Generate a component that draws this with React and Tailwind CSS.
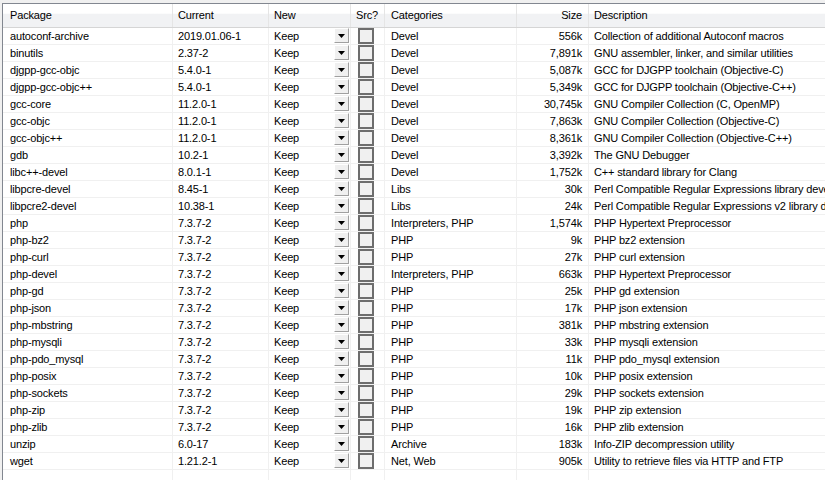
import React from 'react';

const packages = [
  ['autoconf-archive', '2019.01.06-1', 'Devel', '556k', 'Collection of additional Autoconf macros'],
  ['binutils', '2.37-2', 'Devel', '7,891k', 'GNU assembler, linker, and similar utilities'],
  ['djgpp-gcc-objc', '5.4.0-1', 'Devel', '5,087k', 'GCC for DJGPP toolchain (Objective-C)'],
  ['djgpp-gcc-objc++', '5.4.0-1', 'Devel', '5,349k', 'GCC for DJGPP toolchain (Objective-C++)'],
  ['gcc-core', '11.2.0-1', 'Devel', '30,745k', 'GNU Compiler Collection (C, OpenMP)'],
  ['gcc-objc', '11.2.0-1', 'Devel', '7,863k', 'GNU Compiler Collection (Objective-C)'],
  ['gcc-objc++', '11.2.0-1', 'Devel', '8,361k', 'GNU Compiler Collection (Objective-C++)'],
  ['gdb', '10.2-1', 'Devel', '3,392k', 'The GNU Debugger'],
  ['libc++-devel', '8.0.1-1', 'Devel', '1,752k', 'C++ standard library for Clang'],
  ['libpcre-devel', '8.45-1', 'Libs', '30k', 'Perl Compatible Regular Expressions library development'],
  ['libpcre2-devel', '10.38-1', 'Libs', '24k', 'Perl Compatible Regular Expressions v2 library development'],
  ['php', '7.3.7-2', 'Interpreters, PHP', '1,574k', 'PHP Hypertext Preprocessor'],
  ['php-bz2', '7.3.7-2', 'PHP', '9k', 'PHP bz2 extension'],
  ['php-curl', '7.3.7-2', 'PHP', '27k', 'PHP curl extension'],
  ['php-devel', '7.3.7-2', 'Interpreters, PHP', '663k', 'PHP Hypertext Preprocessor'],
  ['php-gd', '7.3.7-2', 'PHP', '25k', 'PHP gd extension'],
  ['php-json', '7.3.7-2', 'PHP', '17k', 'PHP json extension'],
  ['php-mbstring', '7.3.7-2', 'PHP', '381k', 'PHP mbstring extension'],
  ['php-mysqli', '7.3.7-2', 'PHP', '33k', 'PHP mysqli extension'],
  ['php-pdo_mysql', '7.3.7-2', 'PHP', '11k', 'PHP pdo_mysql extension'],
  ['php-posix', '7.3.7-2', 'PHP', '10k', 'PHP posix extension'],
  ['php-sockets', '7.3.7-2', 'PHP', '29k', 'PHP sockets extension'],
  ['php-zip', '7.3.7-2', 'PHP', '19k', 'PHP zip extension'],
  ['php-zlib', '7.3.7-2', 'PHP', '16k', 'PHP zlib extension'],
  ['unzip', '6.0-17', 'Archive', '183k', 'Info-ZIP decompression utility'],
  ['wget', '1.21.2-1', 'Net, Web', '905k', 'Utility to retrieve files via HTTP and FTP'],
];

const HeaderCell = ({ className, children }) => (
  <div className={`h-full flex items-center border-r border-[#e5e5e5] ${className}`}>{children}</div>
);

const DropButton = () => (
  <div className="w-[15px] h-[15px] bg-[#f0f0f0] border border-t-white border-l-white border-r-[#a0a0a0] border-b-[#a0a0a0] flex items-center justify-center">
    <svg width="7" height="4" viewBox="0 0 7 4">
      <path d="M0 0h7L3.5 4z" fill="#000" />
    </svg>
  </div>
);

const App = () => {
  return (
    <div
      className="w-[825px] h-[480px] overflow-hidden bg-[#f0f0f0] pt-[3px] pl-[2px] text-[11px] tracking-[-0.15px] text-black"
      style={{ fontFamily: '"Liberation Sans", Arial, sans-serif' }}
    >
      <div className="h-full bg-white border-t border-l border-[#828790] flex flex-col">
        {/* column headers */}
        <div className="h-[24px] shrink-0 flex border-b border-[#d5d5d5] bg-[linear-gradient(#ffffff_0%,#ffffff_40%,#f1f2f4_45%,#f1f2f4_100%)] whitespace-nowrap">
          <HeaderCell className="w-[170px] pl-[7px]">Package</HeaderCell>
          <HeaderCell className="w-[96px] pl-[5px]">Current</HeaderCell>
          <HeaderCell className="w-[82px] pl-[5px]">New</HeaderCell>
          <HeaderCell className="w-[34px] pl-[5px]">Src?</HeaderCell>
          <HeaderCell className="w-[132px] pl-[6px]">Categories</HeaderCell>
          <HeaderCell className="w-[72px] pr-[6px] justify-end">Size</HeaderCell>
          <div className="flex-1 h-full flex items-center pl-[5px]">Description</div>
        </div>

        {/* rows */}
        <div className="flex-1 flex flex-col">
          {packages.map(([name, current, cats, size, desc]) => (
            <div key={name} className="h-[17px] shrink-0 flex border-b border-[#f0f0f0] whitespace-nowrap">
              <div className="w-[170px] pl-[7px] border-r border-[#f0f0f0] flex items-center overflow-hidden">{name}</div>
              <div className="w-[96px] pl-[5px] border-r border-[#f0f0f0] flex items-center overflow-hidden">{current}</div>
              <div className="w-[82px] pl-[5px] pr-[1px] border-r border-[#f0f0f0] flex items-start justify-between">
                <span className="leading-[16px]">Keep</span>
                <DropButton />
              </div>
              <div className="w-[34px] pl-[7px] border-r border-[#f0f0f0] flex items-start">
                <div className="w-[16px] h-[16px] bg-[#f0f0f0] border-2 border-[#6d6d6d]" />
              </div>
              <div className="w-[132px] pl-[6px] border-r border-[#f0f0f0] flex items-center overflow-hidden">{cats}</div>
              <div className="w-[72px] pr-[6px] border-r border-[#f0f0f0] flex items-center justify-end">{size}</div>
              <div className="flex-1 pl-[5px] flex items-center overflow-hidden">{desc}</div>
            </div>
          ))}
          <div className="flex-1 flex">
            <div className="w-[170px] border-r border-[#f0f0f0]" />
            <div className="w-[96px] border-r border-[#f0f0f0]" />
            <div className="w-[82px] border-r border-[#f0f0f0]" />
            <div className="w-[34px] border-r border-[#f0f0f0]" />
            <div className="w-[132px] border-r border-[#f0f0f0]" />
            <div className="w-[72px] border-r border-[#f0f0f0]" />
            <div className="flex-1" />
          </div>
        </div>
      </div>
    </div>
  );
};

export default App;
